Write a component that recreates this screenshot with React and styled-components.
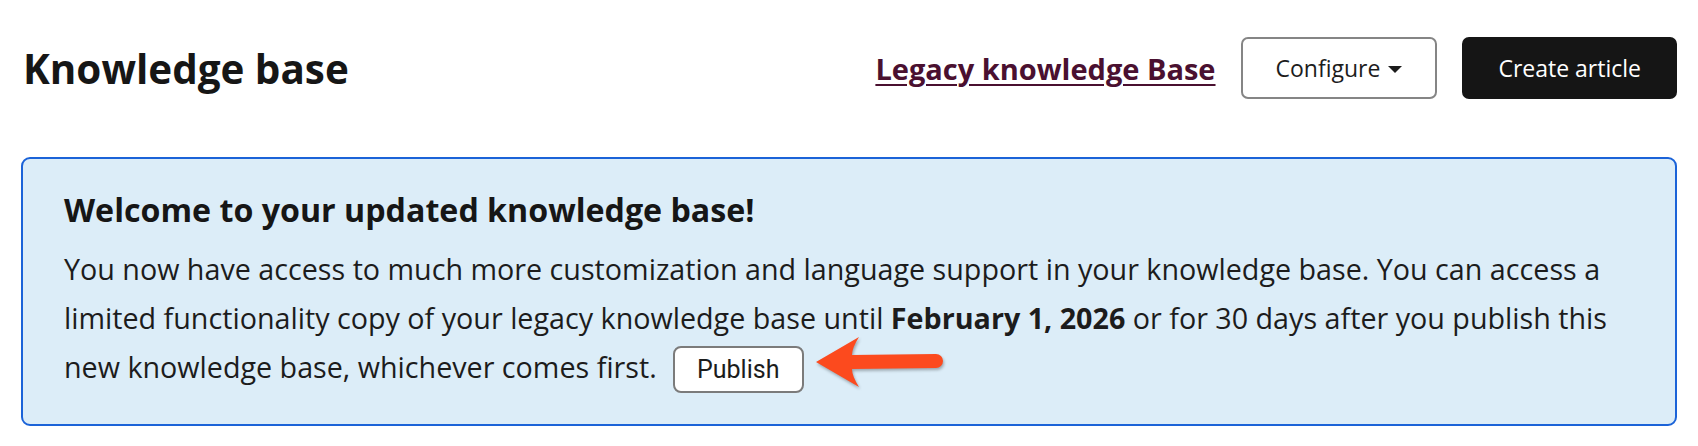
import React from 'react'
import styled, {createGlobalStyle} from 'styled-components'

const GlobalStyle = createGlobalStyle`
    body {
        margin: 0;
        background: #ffffff;
        font-family: "Open Sans", Lato, sans-serif;
        color: #1c1c1c;
    }
`

const Page = styled.div`
    padding: 37px 21px 20px 21px;
`

const Header = styled.header`
    display: flex;
    align-items: center;
    justify-content: space-between;
    padding-left: 2px;
`

const Title = styled.h1`
    margin: 0;
    font-size: 40.4px;
    font-weight: 700;
    color: #161616;
`

const Actions = styled.div`
    display: flex;
    align-items: center;
    gap: 25px;
`

const LegacyLink = styled.a`
    font-size: 29px;
    font-weight: 700;
    color: #4a1030;
    text-decoration: underline;
    text-decoration-thickness: 2px;
    text-underline-offset: 4px;
    cursor: pointer;
`

const Button = styled.button`
    display: inline-flex;
    align-items: center;
    gap: 8px;
    height: 62px;
    padding: 0 ${p => p.$pad || 34}px;
    border-radius: 7px;
    font-family: "Open Sans", sans-serif;
    font-size: 23px;
    cursor: pointer;
    border: 2px solid ${p => p.$dark ? '#151515' : '#858585'};
    background: ${p => p.$dark ? '#151515' : '#ffffff'};
    color: ${p => p.$dark ? '#ffffff' : '#1c1c1c'};
`

const Caret = styled.span`
    width: 0;
    height: 0;
    border-left: 7px solid transparent;
    border-right: 7px solid transparent;
    border-top: 7px solid #1c1c1c;
    margin-top: 2px;
`

const Banner = styled.section`
    margin-top: 58px;
    border: 2px solid #1b63d8;
    border-radius: 9px;
    background: #dcedf8;
    padding: 33px 20px 31px 41px;
`

const BannerTitle = styled.h2`
    margin: 0 0 16px;
    font-size: 32.2px;
    line-height: 36px;
    font-weight: 700;
    color: #161616;
`

const BannerText = styled.p`
    margin: 0;
    font-size: 28.7px;
    line-height: 49px;
    color: #1c1c1c;

    strong {
        font-weight: 700;
    }
`

const PublishWrap = styled.span`
    position: relative;
    display: inline-block;
    margin-left: 16px;
`

const PublishButton = styled.button`
    height: 47px;
    width: 131px;
    border: 2px solid #7b7b7b;
    border-radius: 8px;
    background: #ffffff;
    font-family: Roboto, sans-serif;
    font-size: 25px;
    color: #1c1c1c;
    cursor: pointer;
`

const Arrow = styled.svg`
    position: absolute;
    left: 141px;
    top: -8px;
    filter: drop-shadow(1px 2px 1.5px rgba(0, 0, 0, 0.3));
`

export default function App() {
    return (
        <>
            <GlobalStyle/>
            <Page>
                <Header>
                    <Title>Knowledge base</Title>
                    <Actions>
                        <LegacyLink>Legacy knowledge Base</LegacyLink>
                        <Button $pad={33}>Configure <Caret/></Button>
                        <Button $dark>Create article</Button>
                    </Actions>
                </Header>
                <Banner>
                    <BannerTitle>Welcome to your updated knowledge base!</BannerTitle>
                    <BannerText>
                        You now have access to much more customization and language support in your knowledge base. You can access a<br/>
                        limited functionality copy of your legacy knowledge base until <strong>February 1, 2026</strong> or for 30 days after you publish this<br/>
                        new knowledge base, whichever comes first.
                        <PublishWrap>
                            <PublishButton>Publish</PublishButton>
                            <Arrow width="132" height="56" viewBox="0 0 132 56">
                                <path
                                    d="M2 28 L45 3 Q38 14 38 21 L122 20 A7 7 0 0 1 122 34 L38 35 Q38 42 45 53 Z"
                                    fill="#fc4a1e"
                                />
                            </Arrow>
                        </PublishWrap>
                    </BannerText>
                </Banner>
            </Page>
        </>
    )
}
